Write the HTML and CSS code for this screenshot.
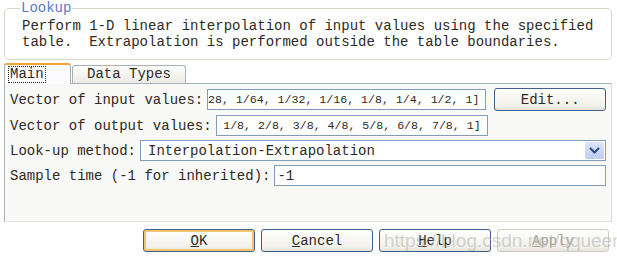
FILE: index.html
```html
<!DOCTYPE html>
<html lang="en">
<head>
  <meta charset="UTF-8">
  <title>Lookup</title>
  <link rel="stylesheet" href="styles.css">
</head>
<body>
<div class="dlg">

  <fieldset class="group">
    <legend>Lookup</legend>
    <p>Perform 1-D linear interpolation of input values using the specified</p>
    <p>table.  Extrapolation is performed outside the table boundaries.</p>
  </fieldset>

  <div class="tabs">
    <div class="tab active"><span class="focus">Main</span></div>
    <div class="tab">Data Types</div>
  </div>

  <div class="panel">
    <div class="row">
      <span class="lbl">Vector of input values:</span>
      <div class="field w1"><span>[1/128, 1/64, 1/32, 1/16, 1/8, 1/4, 1/2, 1]</span></div>
      <button class="btn edit">Edit...</button>
    </div>
    <div class="row">
      <span class="lbl">Vector of output values:</span>
      <div class="field w2"><span>[0, 1/8, 2/8, 3/8, 4/8, 5/8, 6/8, 7/8, 1]</span></div>
    </div>
    <div class="row">
      <span class="lbl">Look-up method:</span>
      <div class="select">
        <span>Interpolation-Extrapolation</span>
        <span class="drop">
          <svg width="11" height="7" viewBox="0 0 11 7"><path d="M1 1 L5.5 5.5 L10 1" fill="none" stroke="#2c4a86" stroke-width="2"/></svg>
        </span>
      </div>
    </div>
    <div class="row">
      <span class="lbl">Sample time (-1 for inherited):</span>
      <div class="field grow"><span class="left">-1</span></div>
    </div>
  </div>

  <div class="buttons">
    <button class="btn ok"><u>O</u>K</button>
    <button class="btn"><u>C</u>ancel</button>
    <button class="btn"><u>H</u>elp</button>
    <button class="btn off"><u>A</u>pply</button>
  </div>

  <div class="watermark">https://blog.csdn.net/qqueen</div>
</div>
</body>
</html>
```

FILE: styles.css
```css
body {
  margin: 0;
  background: #fff;
  font-family: 'Liberation Mono', 'DejaVu Sans Mono', monospace;
  font-size: 14px;
  color: #2e2a24;
}
.dlg {
  position: relative;
  width: 608px;
  padding: 0 0 0 4px;
}
.group {
  margin: 0;
  padding: 2px 10px 9px 17px;
  border: 1px solid #d8d5ca;
  border-radius: 5px;
}
.group legend {
  padding: 0 1px;
  margin-left: -2px;
  color: #5a78c8;
  line-height: 16px;
}
.group p {
  margin: 0;
  line-height: 16px;
  white-space: pre;
}
.tabs {
  display: flex;
  align-items: flex-end;
  margin-top: 2px;
  height: 21px;
}
.tab {
  height: 17px;
  line-height: 17px;
  padding: 0 14px;
  margin-left: 1px;
  border: 1px solid #a9b2b6;
  border-bottom: none;
  border-radius: 3px 3px 0 0;
  background: linear-gradient(#fcfcfb, #ecebe6);
  width: 84px;
}
.tab.active {
  height: 19px;
  margin-left: 0;
  width: 65px;
  padding: 0;
  background: #fcfcfe;
  border-top: 2px solid #f0a43a;
  position: relative;
  z-index: 1;
  margin-bottom: -1px;
}
.focus {
  display: inline-block;
  margin: 2px 0 0 4px;
  line-height: 15px;
  padding: 0 1px;
  outline: 1px dotted #333;
}
.panel {
  height: 133px;
  border: 1px solid #a9b2b6;
  border-right-color: #dcdcd8;
  border-bottom-color: #e4e4e0;
  background: #f9f9f8;
  padding: 4px 5px 0 5px;
  display: flex;
  flex-direction: column;
  gap: 4px;
}
.row {
  display: flex;
  align-items: center;
  gap: 4px;
  min-height: 21px;
}
.lbl {
  white-space: pre;
}
.field {
  height: 19px;
  border: 1px solid #7f9db9;
  background: #fff;
  display: flex;
  justify-content: flex-end;
  align-items: center;
  overflow: hidden;
  padding: 0 6px 0 2px;
  box-sizing: border-box;
  font-size: 11.6px;
  white-space: pre;
}
.field .left {
  margin-right: auto;
  font-size: 14px;
}
.w1 { width: 280px; height: 21px; }
.w2 { width: 272px; height: 21px; }
.grow { flex: 1; height: 21px; }
.select {
  flex: 1;
  height: 21px;
  box-sizing: border-box;
  border: 1px solid #7f9db9;
  background: #fff;
  display: flex;
  align-items: center;
  justify-content: space-between;
  padding: 0 1px 0 7px;
}
.drop {
  width: 19px;
  height: 17px;
  background: linear-gradient(#dce6f8, #bccdf0);
  border-radius: 2px;
  display: flex;
  align-items: center;
  justify-content: center;
}
.btn {
  font-family: inherit;
  font-size: 14px;
  color: #2e2a24;
  width: 112px;
  height: 23px;
  border: 1px solid #3f6088;
  border-radius: 3px;
  background: linear-gradient(#fefefd, #f2f1ea 80%, #e4e2d8);
  padding: 0;
}
.edit {
  margin-left: 4px;
}
.buttons {
  display: flex;
  justify-content: flex-end;
  gap: 6px;
  margin-top: 7px;
  padding-right: 3px;
}
.btn.ok {
  box-shadow: inset 0 0 0 2px #f6c46a;
}
.btn.off {
  color: #a8a698;
  border-color: #cfcdc0;
}
.watermark {
  position: absolute;
  left: 384px;
  top: 230px;
  font-family: 'Liberation Sans', Arial, sans-serif;
  font-size: 19px;
  color: rgba(170, 170, 170, 0.5);
  white-space: nowrap;
  pointer-events: none;
}
```
